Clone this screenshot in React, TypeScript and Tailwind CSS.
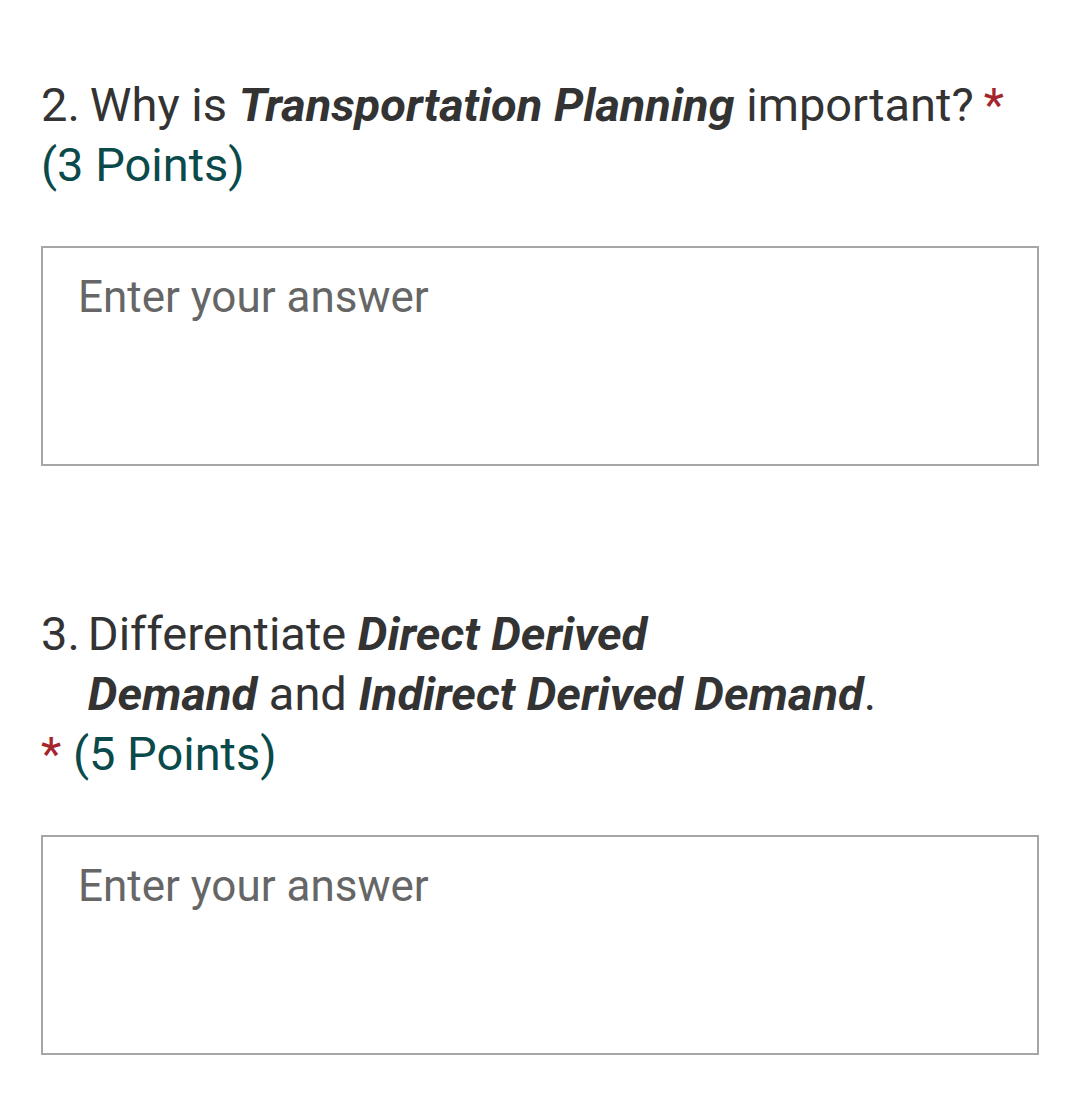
import React from 'react';

const font = { fontFamily: 'Roboto, "Noto Sans", sans-serif' };

const AnswerBox: React.FC = () => (
  <div className="mt-[51px] h-[220px] border-2 border-[#a6a6a6] px-[35px] pt-[19px]">
    <textarea
      placeholder="Enter your answer"
      className="w-full h-full resize-none outline-none bg-transparent text-[44px] leading-[60px] text-[#333] placeholder:text-[#666]"
    />
  </div>
);

export default function App() {
  return (
    <div className="min-h-[1119px] w-[1080px] bg-white px-[41px] pt-[75px] text-[47px] leading-[60px] text-[#333]" style={font}>
      {/* question 2 */}
      <div>
        <div className="flex flex-wrap items-baseline">
          <span className="mr-[10px]">2.</span>
          <span>
            Why is <b className="italic font-bold">Transportation Planning</b> important?
          </span>
          <span className="ml-[10px] text-[#a4262c]">*</span>
        </div>
        <div className="text-[#0b4a4a]">(3 Points)</div>
        <AnswerBox />
      </div>

      {/* question 3 */}
      <div className="mt-[138px]">
        <div className="flex items-baseline">
          <span className="mr-[8px]">3.</span>
          <span>
            Differentiate <b className="italic font-bold">Direct Derived</b>
            <br />
            <b className="italic font-bold">Demand</b> and <b className="italic font-bold">Indirect Derived Demand</b>.
          </span>
        </div>
        <div>
          <span className="text-[#a4262c]">*</span>{' '}
          <span className="text-[#0b4a4a]">(5 Points)</span>
        </div>
        <AnswerBox />
      </div>
    </div>
  );
}
